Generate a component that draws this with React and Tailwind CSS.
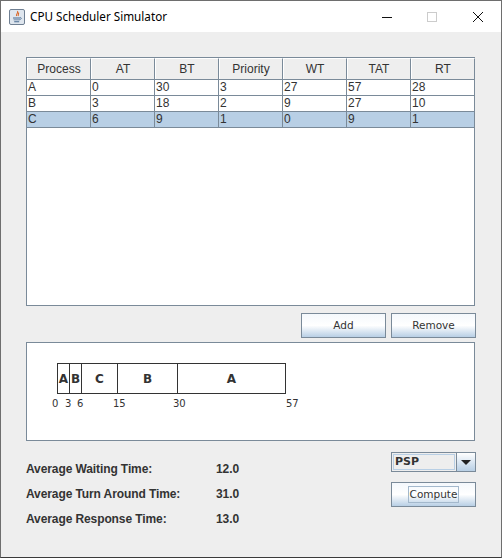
import React from 'react';

const columns = ['Process', 'AT', 'BT', 'Priority', 'WT', 'TAT', 'RT'];
const rows = [
  ['A', '0', '30', '3', '27', '57', '28'],
  ['B', '3', '18', '2', '9', '27', '10'],
  ['C', '6', '9', '1', '0', '9', '1'],
];
const bars = [
  { name: 'A', width: 'w-3' },
  { name: 'B', width: 'w-3' },
  { name: 'C', width: 'w-9' },
  { name: 'B', width: 'w-[60px]' },
  { name: 'A', width: 'w-[107px]' },
];
const ticks = [
  { label: '0', width: 'w-[13px]' },
  { label: '3', width: 'w-3' },
  { label: '6', width: 'w-9' },
  { label: '15', width: 'w-[60px]' },
  { label: '30', width: 'w-[113px]' },
  { label: '57', width: 'w-4' },
];
const stats = [
  ['Average Waiting Time:', '12.0'],
  ['Average Turn Around Time:', '31.0'],
  ['Average Response Time:', '13.0'],
];

const JavaIcon = () => (
  <svg width="16" height="16" viewBox="0 0 16 16">
    <rect x="0.5" y="0.5" width="15" height="15" rx="1.5" fill="#dfe6ee" stroke="#6f7f92" />
    <path d="M8.5 2C9.8 4 6.6 4.8 7.6 7M10 3.6C8.8 4.8 9.8 5.6 9 7" fill="none" stroke="#d9682a" strokeWidth="1.1" />
    <path d="M4 8.5h7v.9H4zM4.6 10.4h6v.9h-6zM5.2 12.3h5v.9h-5z" fill="#46688f" />
    <path d="M11 8.6c1.8-.4 1.8 1.8-.5 2" fill="none" stroke="#46688f" strokeWidth="0.8" />
  </svg>
);

const MetalButton = ({ children, focused }) => (
  <button className="w-[85px] h-[25px] flex items-center justify-center border border-[#7a8a99] bg-gradient-to-b from-[#f4f8fc] via-[#ffffff] to-[#b8cfe5] text-[10.5px] text-[#333333] font-['DejaVu_Sans',sans-serif]">
    {focused ? <span className="h-[17px] px-px leading-[15px] border border-[#a3b8cc]">{children}</span> : children}
  </button>
);

export default function App() {
  return (
    <div className="w-[502px] h-[558px] flex flex-col bg-[#eeeeee] border border-[#6e6e6e] border-b-[#3a3a3a] font-['Liberation_Sans',sans-serif] overflow-hidden">
      <div className="h-[31px] shrink-0 bg-white flex items-center pl-[8px] text-black">
        <JavaIcon />
        <span className="ml-[5px] text-[11.7px] font-['Noto_Sans',sans-serif]">CPU Scheduler Simulator</span>
        <div className="ml-auto flex items-center">
          <svg width="12" height="12" viewBox="0 0 12 12"><path d="M1 6.5h10" stroke="#111111" /></svg>
          <svg className="ml-[33px]" width="12" height="12" viewBox="0 0 12 12"><rect x="1.5" y="1.5" width="9" height="9" fill="none" stroke="#cccccc" /></svg>
          <svg className="ml-[34px] mr-[17px]" width="12" height="12" viewBox="0 0 12 12"><path d="M1 1l10 10M11 1L1 11" stroke="#111111" /></svg>
        </div>
      </div>

      <div className="flex-1 flex flex-col pl-[25px] pt-[25px]">
        <div className="h-[249px] w-[449px] bg-white border border-[#7a8a99]">
          <div className="flex h-[22px] bg-[#eeeeee] border-b border-[#7a8a99]">
            {columns.map((col) => (
              <div key={col} className="w-[64px] shrink-0 flex items-center justify-center border-r border-[#7a8a99] border-t border-l border-t-white border-l-white text-[12px] text-[#333333]">
                {col}
              </div>
            ))}
          </div>
          {rows.map((row, i) => (
            <div key={row[0]} className={`flex h-[16px] border-b border-[#7a8a99] text-[12px] leading-[15px] text-[#333333] ${i === 2 ? 'bg-[#b8cfe5]' : 'bg-white'}`}>
              {row.map((cell, j) => (
                <div key={j} className="w-[64px] shrink-0 pl-px border-r border-[#7a8a99]">{cell}</div>
              ))}
            </div>
          ))}
        </div>

        <div className="flex justify-end gap-[5px] mt-[7px] w-[450px]">
          <MetalButton>Add</MetalButton>
          <MetalButton>Remove</MetalButton>
        </div>

        <div className="mt-[4px] h-[99px] w-[449px] bg-white border border-[#7a8a99] pl-[30px] pt-[20px]">
          <div className="flex w-[229px] h-[31px] border border-[#333333]">
            {bars.map((bar, i) => (
              <div key={i} className={`${bar.width} shrink-0 flex items-center justify-center text-[12px] font-bold text-[#333333] font-['DejaVu_Sans',sans-serif] ${i < 4 ? 'border-r border-[#333333]' : ''}`}>
                {bar.name}
              </div>
            ))}
          </div>
          <div className="flex -ml-[5px] mt-[3px] text-[10px] leading-[13px] text-[#333333] font-['DejaVu_Sans',sans-serif]">
            {ticks.map((tick) => (
              <div key={tick.label} className={`${tick.width} shrink-0`}>{tick.label}</div>
            ))}
          </div>
        </div>

        <div className="flex justify-between w-[450px] mt-[11px]">
          <div className="flex flex-col gap-[10px] pt-[10px] text-[12px] leading-[15px] font-bold tracking-[-0.1px] text-[#333333]">
            {stats.map(([label, value]) => (
              <div key={label} className="flex">
                <span className="w-[190px]">{label}</span>
                <span>{value}</span>
              </div>
            ))}
          </div>
          <div className="flex flex-col gap-[10px]">
            <div className="w-[85px] h-[20px] flex border border-[#7a8a99] bg-[#eeeeee]">
              <div className="flex-1 m-px pl-px border border-[#b8cfe5] text-[11px] leading-[14px] font-bold text-[#333333] font-['DejaVu_Sans',sans-serif]">PSP</div>
              <div className="w-[19px] flex items-center justify-center border-l border-[#7a8a99] bg-gradient-to-b from-[#ffffff] to-[#b8cfe5]">
                <svg width="10" height="5" viewBox="0 0 10 5"><path d="M0 0h10L5 5z" fill="#222222" /></svg>
              </div>
            </div>
            <MetalButton focused>Compute</MetalButton>
          </div>
        </div>
      </div>
    </div>
  );
}
